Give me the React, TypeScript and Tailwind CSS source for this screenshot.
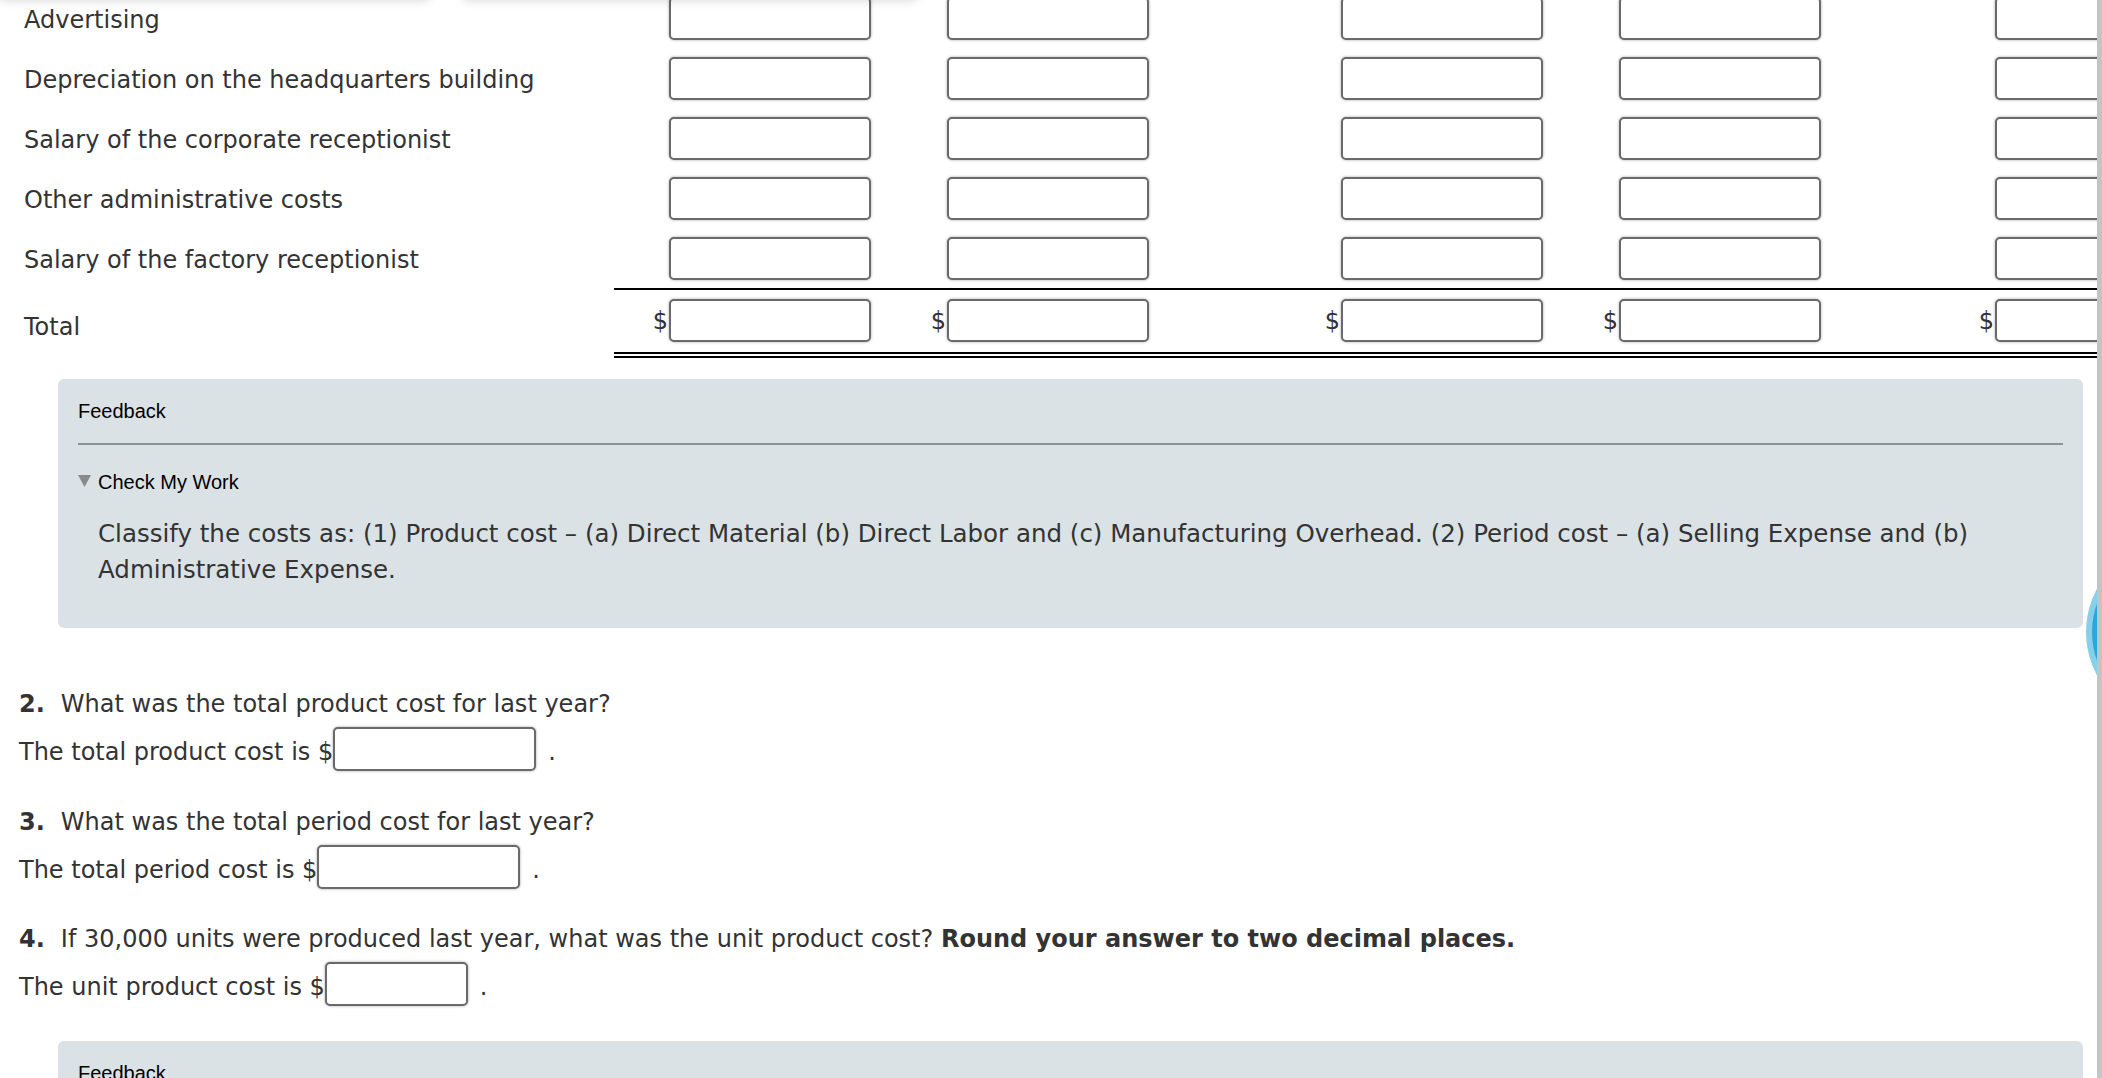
import type { ReactNode } from 'react'

const rows = [
  'Advertising',
  'Depreciation on the headquarters building',
  'Salary of the corporate receptionist',
  'Other administrative costs',
  'Salary of the factory receptionist',
]

const cols = [0, 1, 2, 3, 4]

function Box({ w = 'w-[202px]', h = 'h-[43px]' }: { w?: string; h?: string }) {
  return (
    <div
      className={`${w} ${h} shrink-0 rounded-[5px] border-2 border-[#6a6a6a] bg-white shadow-[0_0_3px_rgba(0,0,0,0.35)]`}
    />
  )
}

function Question({ num, children }: { num: string; children: ReactNode }) {
  return (
    <p className="leading-[36px]">
      <span className="mr-[16px] font-bold">{num}</span>
      {children}
    </p>
  )
}

function Answer({ label, w }: { label: string; w: string }) {
  return (
    <div className="flex h-[44px] items-center">
      <span className="whitespace-pre pt-[6px]">{label}</span>
      <Box w={w} h="h-[44px]" />
      <span className="ml-[12px] pt-[6px]">.</span>
    </div>
  )
}

function Feedback({ open }: { open?: boolean }) {
  return (
    <div className="ml-[58px] mr-[14px] rounded-[6px] bg-[#dae2e6] px-[20px] pb-[40px] pt-[21px]">
      <p className="font-['Liberation_Sans',Arial,sans-serif] text-[20px] leading-[23px] text-black">
        Feedback
      </p>
      {open && (
        <>
          <div className="mt-[20px] h-[2px] bg-[#8d9396]" />
          <div className="mt-[26px] flex items-center font-['Liberation_Sans',Arial,sans-serif] text-[20px] leading-[23px] text-black">
            <svg width="13" height="12" viewBox="0 0 13 12" className="mr-[7px] mt-[-4px]">
              <polygon points="0,0 13,0 6.5,12" fill="#8a8a8a" />
            </svg>
            Check My Work
          </div>
          <p className="mt-[22px] pl-[20px] text-[24.5px] leading-[36px]">
            Classify the costs as: (1) Product cost – (a) Direct Material (b) Direct Labor and (c) Manufacturing
            Overhead. (2) Period cost – (a) Selling Expense and (b) Administrative Expense.
          </p>
        </>
      )}
    </div>
  )
}

export default function App() {
  return (
    <div className="relative h-[1078px] w-[2102px] overflow-hidden bg-white font-['DejaVu_Sans',Verdana,sans-serif] text-[24px] text-[#333]">
      {/* shadows of the toolbar just above the view */}
      <div className="absolute left-0 top-[-14px] h-[14px] w-[430px] rounded-b-md shadow-[0_2px_8px_rgba(0,0,0,0.12)]" />
      <div className="absolute left-[462px] top-[-14px] h-[14px] w-[455px] rounded-b-md shadow-[0_2px_8px_rgba(0,0,0,0.12)]" />

      {/* chat bubble, mostly off-screen */}
      <div className="absolute left-[2086px] top-[541px] z-[5] h-[182px] w-[182px] rounded-full border-[6px] border-[#86d0ea] bg-[#2aa8dc]" />

      <div className="flex h-full">
        <main className="w-[2097px] shrink-0 overflow-hidden">
          {/* cost table */}
          <div className="-mt-[12px] grid w-[2198px] grid-cols-[614px_258px_278px_394px_278px_376px]">
            {rows.map((r) => (
              <div key={r} className="contents">
                <div className="flex h-[60px] items-center pl-[24px] pt-[4px]">{r}</div>
                {cols.map((c) => (
                  <div key={c} className="flex h-[60px] items-center justify-end pr-px">
                    <Box />
                  </div>
                ))}
              </div>
            ))}
            <div className="flex items-center pl-[24px] pt-[8px]">Total</div>
            {cols.map((c) => (
              <div
                key={c}
                className="flex items-center justify-end border-b-[6px] border-t-2 border-b-black border-t-black pb-[10px] pr-px pt-[9px] [border-bottom-style:double]"
              >
                <span className="mr-[1px]">$</span>
                <Box />
              </div>
            ))}
          </div>

          <div className="mt-[21px]">
            <Feedback open />
          </div>

          <div className="pl-[19px]">
            <div className="mt-[58px]">
              <Question num="2.">What was the total product cost for last year?</Question>
            </div>
            <div className="mt-[5px]">
              <Answer label="The total product cost is $" w="w-[203px]" />
            </div>

            <div className="mt-[33px]">
              <Question num="3.">What was the total period cost for last year?</Question>
            </div>
            <div className="mt-[5px]">
              <Answer label="The total period cost is $" w="w-[203px]" />
            </div>

            <div className="mt-[32px]">
              <Question num="4.">
                If 30,000 units were produced last year, what was the unit product cost?{' '}
                <b>Round your answer to two decimal places.</b>
              </Question>
            </div>
            <div className="mt-[5px]">
              <Answer label="The unit product cost is $" w="w-[143px]" />
            </div>
          </div>

          <div className="mt-[35px]">
            <Feedback />
          </div>
        </main>
        <div className="relative z-10 w-[5px] shrink-0 bg-[#c4c4c4]" />
      </div>
    </div>
  )
}
